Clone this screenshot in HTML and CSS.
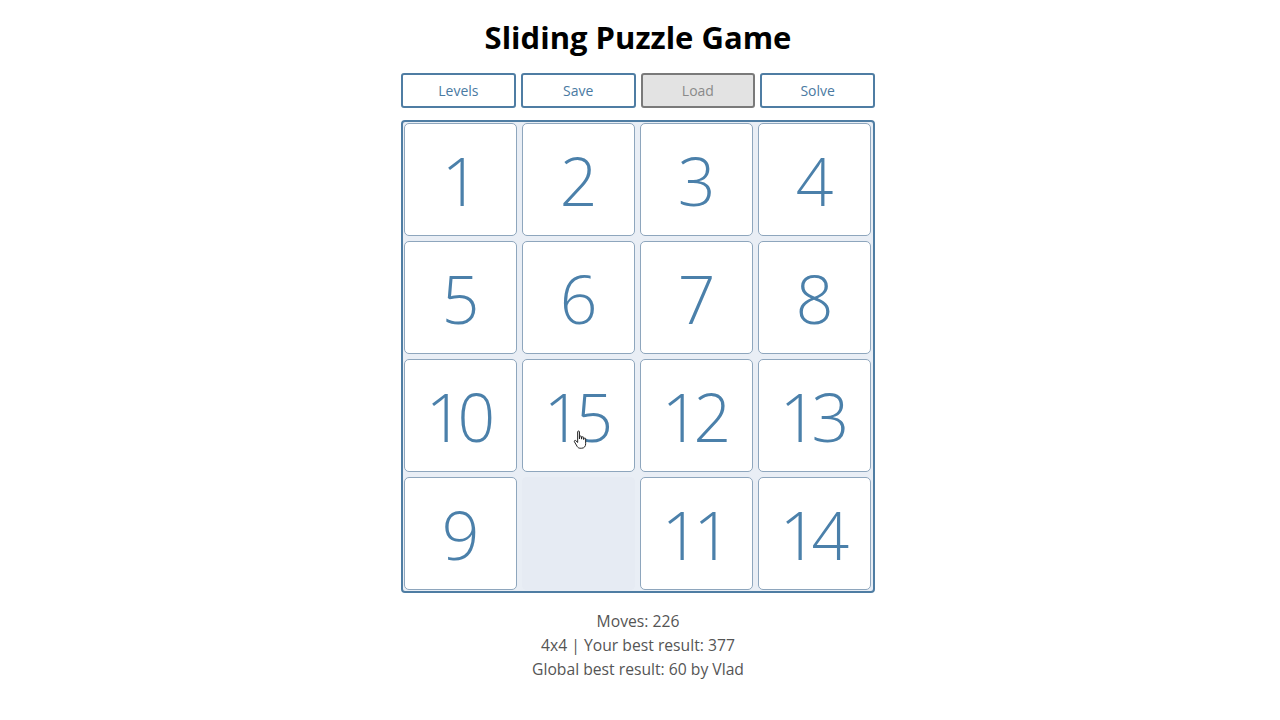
FILE: index.html
```html
<!DOCTYPE html>
<html lang="en">

<head>
  <title>Sliding Puzzle Game</title>
  <meta charset="utf-8">
  <meta name="viewport" content="width=device-width, initial-scale=1">
  <link rel="stylesheet" href="styles.css">
</head>

<body>

  <div class="game">
    <h1 class="title">Sliding Puzzle Game</h1>

    <div class="toolbar">
      <button class="tool-btn">Levels</button>
      <button class="tool-btn">Save</button>
      <button class="tool-btn" disabled>Load</button>
      <button class="tool-btn">Solve</button>
    </div>

    <div class="board">
      <div class="tile">1</div>
      <div class="tile">2</div>
      <div class="tile">3</div>
      <div class="tile">4</div>
      <div class="tile">5</div>
      <div class="tile">6</div>
      <div class="tile">7</div>
      <div class="tile">8</div>
      <div class="tile">10</div>
      <div class="tile hovered">15
        <!-- mouse pointer -->
        <svg class="pointer" width="16" height="20" viewBox="0 0 14 18">
          <path d="M4 1.5c0-.8 1.6-.8 1.6 0V8l.3-2.1c.2-.8 1.5-.7 1.5.1l.1 2.2.3-1.6c.2-.8 1.5-.7 1.5.1l.1 1.9.4-1c.3-.7 1.4-.5 1.4.3v4.5c0 2.2-1.3 4-3.6 4H6.2c-1.2 0-2-.6-2.6-1.5L1.1 10.6c-.5-.8.5-1.7 1.2-1L4 11.2z" fill="#fff" stroke="#222" stroke-width="0.9" stroke-linejoin="round"/>
        </svg>
      </div>
      <div class="tile">12</div>
      <div class="tile">13</div>
      <div class="tile">9</div>
      <div class="tile empty"></div>
      <div class="tile">11</div>
      <div class="tile">14</div>
    </div>

    <div class="stats">
      <div>Moves: 226</div>
      <div>4x4 | Your best result: 377</div>
      <div>Global best result: 60 by Vlad</div>
    </div>
  </div>

</body>

</html>
```

FILE: styles.css
```css
* {
  box-sizing: border-box;
  margin: 0px;
}

body {
  font-family: "Open Sans", "Noto Sans", Arial, sans-serif;
  background-color: white;
}

.game {
  width: 474px;
  margin-left: 401px;
  padding-top: 18px;
}

/* Title on top */
.title {
  font-size: 31px;
  font-weight: 700;
  text-align: center;
  color: #000;
  line-height: 38px;
}

/* Row of four buttons */
.toolbar {
  display: grid;
  grid-template-columns: repeat(4, 1fr);
  gap: 5px;
  margin-top: 17px;
}

.tool-btn {
  height: 35px;
  background-color: white;
  border: 2px solid #4f7da3;
  border-radius: 3px;
  color: #4a7aa2;
  font-family: "Open Sans", "Noto Sans", Arial, sans-serif;
  font-size: 14px;
  padding: 0;
}

.tool-btn:disabled {
  background-color: #e3e3e3;
  border-color: #7a7a7a;
  color: #8a8a8a;
}

/* Puzzle board */
.board {
  display: grid;
  grid-template-columns: repeat(4, 113px);
  grid-template-rows: repeat(4, 113px);
  gap: 5px 5px;
  padding: 1px;
  margin-top: 12px;
  border: 2px solid #4f7da3;
  border-radius: 4px;
  background-color: #e9eef5;
}

.tile {
  position: relative;
  display: flex;
  align-items: center;
  justify-content: center;
  background-color: white;
  border: 1px solid #8ea6bd;
  border-radius: 5px;
  color: #4b80aa;
  font-size: 66px;
  font-weight: 300;
  padding-right: 6px;
  letter-spacing: -6px;
}

.tile.empty {
  background-color: #e6ebf3;
  border-color: #e6ebf3;
}

.pointer {
  position: absolute;
  left: 50px;
  top: 70px;
}

/* Counters under the board */
.stats {
  margin-top: 16px;
  text-align: center;
  font-size: 15.7px;
  line-height: 24px;
  color: #555;
}
```
